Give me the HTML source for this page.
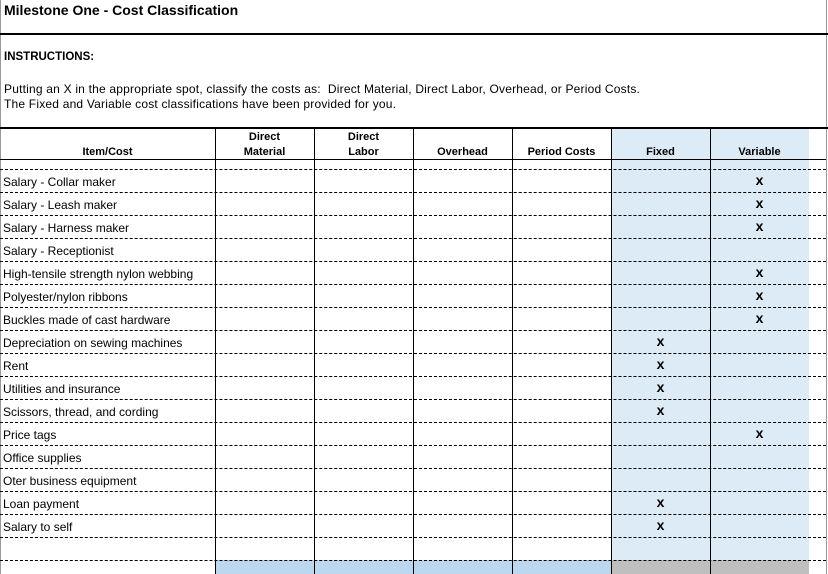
<!DOCTYPE html><html><head><style>
body{margin:0;width:828px;height:574px;overflow:hidden;background:#fff;font-family:"Liberation Sans",sans-serif;position:relative}
div{position:absolute}
.t{font-size:12px;white-space:nowrap;color:#000}
.h{font-size:11px;font-weight:bold;text-align:center;line-height:15px}
.x{font-size:14px;font-weight:bold;width:99px;text-align:center;font-family:"Liberation Sans",sans-serif}
.d{height:0;border-top:1px dashed #000;left:0;width:826px}
.v{top:127px;width:1px;background:#000;height:447px}
</style></head><body>
<div style="left:611px;top:129px;width:198px;height:431px;background:#ddebf7"></div>
<div style="left:215px;top:560px;width:396px;height:14px;background:#bdd7ee"></div>
<div style="left:611px;top:560px;width:198px;height:14px;background:#bfbfbf"></div>
<div style="left:0;top:0;width:1px;height:574px;background:#999"></div>
<div style="left:826px;top:0;width:1px;height:574px;background:#999"></div>
<div style="left:0;top:33px;width:828px;height:2px;background:#000"></div>
<div style="left:0;top:127px;width:828px;height:2px;background:#000"></div>
<div style="left:0;top:159px;width:826px;height:1px;background:#000"></div>
<div class="t" style="left:4px;top:2px;font-size:14px;font-weight:bold">Milestone One - Cost Classification</div>
<div class="t" style="left:4px;top:51px;font-size:11.5px;font-weight:bold">INSTRUCTIONS:</div>
<div class="t" style="left:4px;top:82px;line-height:15px;font-size:12px;letter-spacing:0.2px">Putting an X in the appropriate spot, classify the costs as:&nbsp; Direct Material, Direct Labor, Overhead, or Period Costs.<br>The Fixed and Variable cost classifications have been provided for you.</div>
<div class="v" style="left:215px"></div><div class="v" style="left:314px"></div><div class="v" style="left:413px"></div><div class="v" style="left:512px"></div><div class="v" style="left:611px"></div><div class="v" style="left:710px"></div>
<div class="h" style="left:0;width:215px;top:145px">Item/Cost</div>
<div class="h" style="left:215px;width:99px;top:130px">Direct<br>Material</div>
<div class="h" style="left:314px;width:99px;top:130px">Direct<br>Labor</div>
<div class="h" style="left:413px;width:99px;top:145px">Overhead</div>
<div class="h" style="left:512px;width:99px;top:145px">Period Costs</div>
<div class="h" style="left:611px;width:99px;top:145px">Fixed</div>
<div class="h" style="left:710px;width:99px;top:145px">Variable</div>
<div class="d" style="top:169px"></div><div class="d" style="top:192px"></div><div class="d" style="top:215px"></div><div class="d" style="top:238px"></div><div class="d" style="top:261px"></div><div class="d" style="top:284px"></div><div class="d" style="top:307px"></div><div class="d" style="top:330px"></div><div class="d" style="top:353px"></div><div class="d" style="top:376px"></div><div class="d" style="top:399px"></div><div class="d" style="top:422px"></div><div class="d" style="top:445px"></div><div class="d" style="top:468px"></div><div class="d" style="top:491px"></div><div class="d" style="top:514px"></div><div class="d" style="top:537px"></div><div class="d" style="top:560px"></div>
<div class="t" style="left:3px;top:175px">Salary - Collar maker</div>
<div class="t" style="left:3px;top:198px">Salary - Leash maker</div>
<div class="t" style="left:3px;top:221px">Salary - Harness maker</div>
<div class="t" style="left:3px;top:244px">Salary - Receptionist</div>
<div class="t" style="left:3px;top:267px">High-tensile strength nylon webbing</div>
<div class="t" style="left:3px;top:290px">Polyester/nylon ribbons</div>
<div class="t" style="left:3px;top:313px">Buckles made of cast hardware</div>
<div class="t" style="left:3px;top:336px">Depreciation on sewing machines</div>
<div class="t" style="left:3px;top:359px">Rent</div>
<div class="t" style="left:3px;top:382px">Utilities and insurance</div>
<div class="t" style="left:3px;top:405px">Scissors, thread, and cording</div>
<div class="t" style="left:3px;top:428px">Price tags</div>
<div class="t" style="left:3px;top:451px">Office supplies</div>
<div class="t" style="left:3px;top:474px">Oter business equipment</div>
<div class="t" style="left:3px;top:497px">Loan payment</div>
<div class="t" style="left:3px;top:520px">Salary to self</div>
<div class="x" style="left:710px;top:172px">x</div>
<div class="x" style="left:710px;top:195px">x</div>
<div class="x" style="left:710px;top:218px">x</div>
<div class="x" style="left:710px;top:264px">x</div>
<div class="x" style="left:710px;top:287px">x</div>
<div class="x" style="left:710px;top:310px">x</div>
<div class="x" style="left:611px;top:333px">x</div>
<div class="x" style="left:611px;top:356px">x</div>
<div class="x" style="left:611px;top:379px">x</div>
<div class="x" style="left:611px;top:402px">x</div>
<div class="x" style="left:710px;top:425px">x</div>
<div class="x" style="left:611px;top:494px">x</div>
<div class="x" style="left:611px;top:517px">x</div>
</body></html>
